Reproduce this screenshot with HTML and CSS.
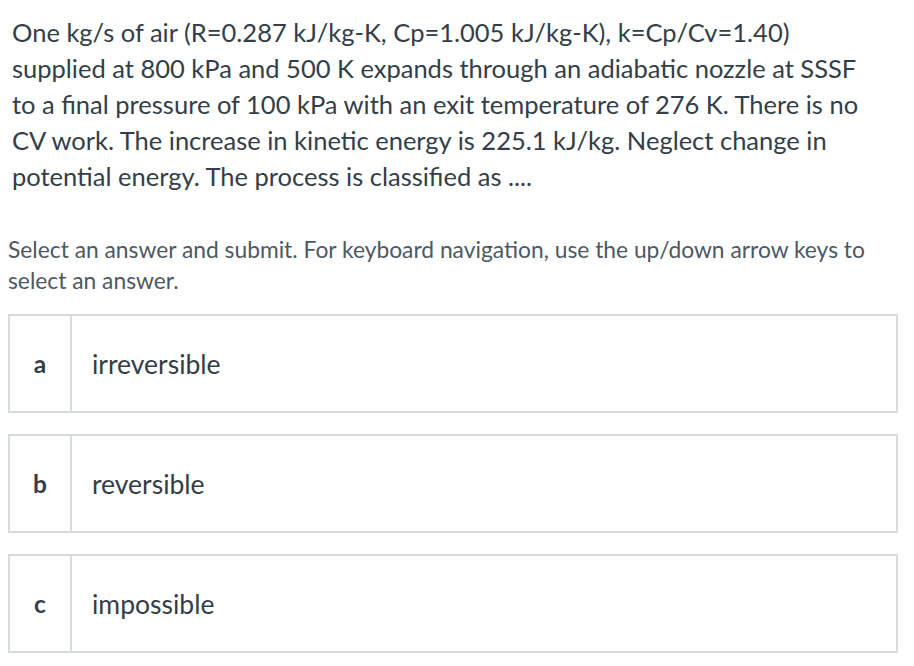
FILE: index.html
```html
<!DOCTYPE html>
<html lang="en">
<head>
<meta charset="utf-8">
<title>Question</title>
<link rel="stylesheet" href="styles.css">
</head>
<body>
<main class="quiz">
  <p class="question">One kg/s of air (R=0.287 kJ/kg-K, Cp=1.005 kJ/kg-K), k=Cp/Cv=1.40) supplied at 800 kPa and 500 K expands through an adiabatic nozzle at SSSF to a final pressure of 100 kPa with an exit temperature of 276 K. There is no CV work. The increase in kinetic energy is 225.1 kJ/kg. Neglect change in potential energy. The process is classified as ....</p>
  <p class="hint">Select an answer and submit. For keyboard navigation, use the up/down arrow keys to select an answer.</p>
  <ul class="options">
    <li class="option"><span class="letter">a</span><span class="label">irreversible</span></li>
    <li class="option"><span class="letter">b</span><span class="label">reversible</span></li>
    <li class="option"><span class="letter">c</span><span class="label">impossible</span></li>
  </ul>
</main>
</body>
</html>
```

FILE: styles.css
```css
* { box-sizing: border-box; }
html, body { background: #ffffff; }
body {
  margin: 0;
  padding: 0 8px;
  font-family: "Lato", "Noto Sans", sans-serif;
}
.quiz { width: 890px; }
.question {
  margin: 0;
  padding: 14px 0 0 4px;
  width: 868px;
  font-size: 25.5px;
  line-height: 36px;
  color: #333e48;
}
.hint {
  margin: 40px 0 0 0;
  font-size: 22.8px;
  line-height: 31px;
  color: #4d5863;
}
.options {
  list-style: none;
  margin: 18px 0 0 0;
  padding: 0;
  display: flex;
  flex-direction: column;
  gap: 21px;
}
.option {
  display: flex;
  height: 99px;
  border: 2px solid #d6dbde;
  color: #333e48;
}
.letter {
  width: 62px;
  border-right: 2px solid #d6dbde;
  display: flex;
  align-items: center;
  justify-content: center;
  font-weight: 700;
  font-size: 24.5px;
}
.label {
  display: flex;
  align-items: center;
  padding-left: 20px;
  font-size: 26.5px;
}
```
